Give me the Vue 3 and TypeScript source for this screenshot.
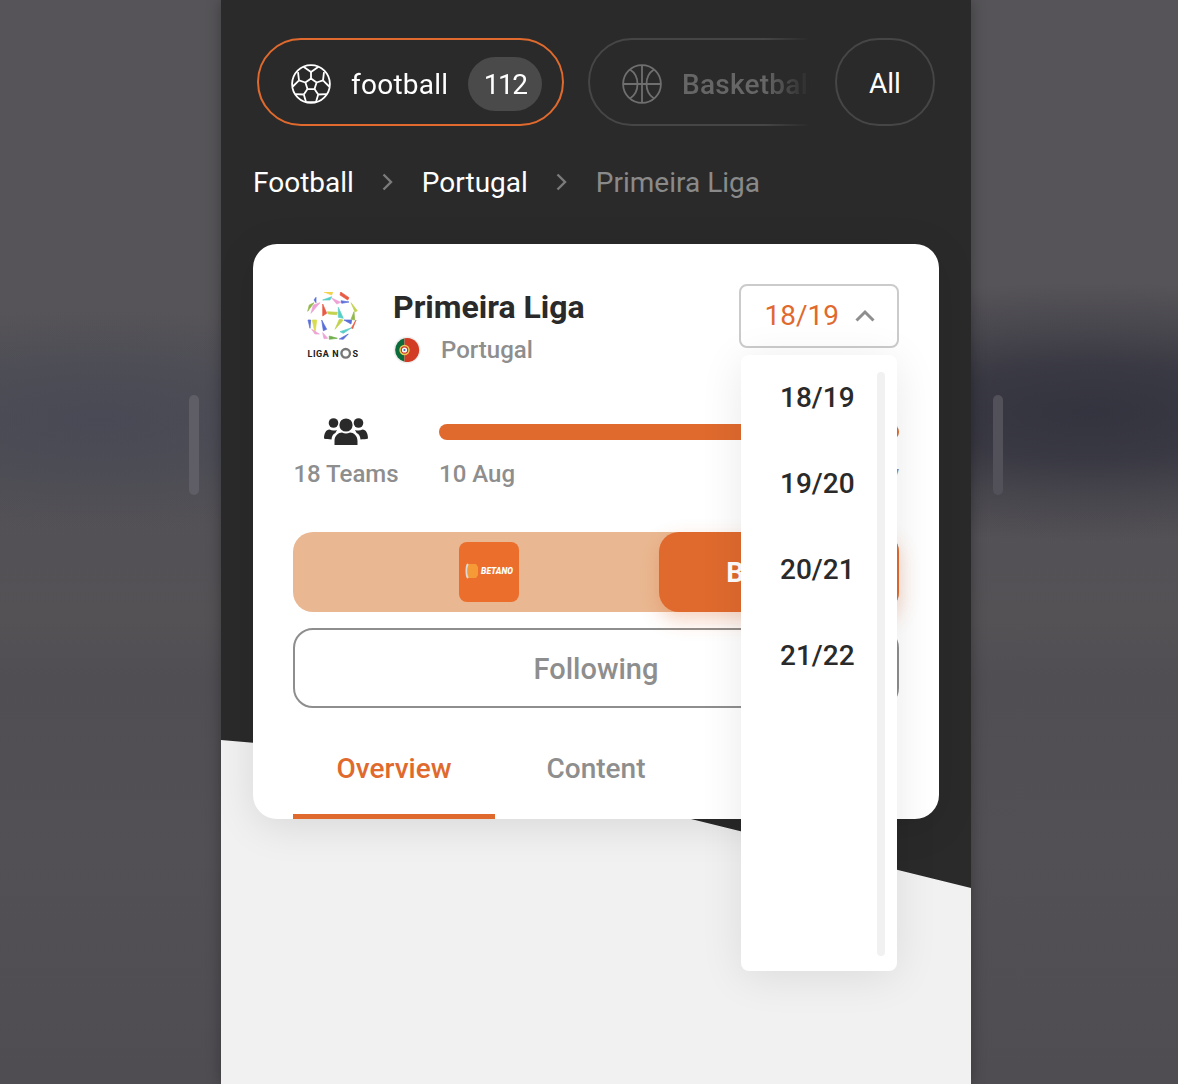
<script setup lang="ts">
const seasons: string[] = ['18/19', '19/20', '20/21', '21/22']
const shards: { p: string; c: string }[] = [
  { p: '17,0 25.7,0 24.7,3', c: '#f2d24a' },
  { p: '33.7,0 42,5.7 40.7,8 33,3', c: '#ea5b45' },
  { p: '34,8.7 42,10 34.7,11.3', c: '#5a6fd8' },
  { p: '24.7,6 33.7,10.3 29.7,12', c: '#eea3d6' },
  { p: '15.7,8 24.7,4.7 23,8', c: '#58cfc6' },
  { p: '7,8 9,5.3 9,10.7', c: '#5a6fd8' },
  { p: '13,10.7 4,21.3 6.3,13', c: '#eea3d6' },
  { p: '7,10.7 0.7,19.3 2.3,13', c: '#90b84a' },
  { p: '15.7,12 19.7,21.3 15.7,24', c: '#ea5b45' },
  { p: '20.3,19.7 30.3,20.3 29.7,22.7 21.3,22', c: '#c3d24e' },
  { p: '31.3,15.3 36.3,26.3 31.3,25.3', c: '#58cfc6' },
  { p: '44,10.7 50.3,18.7 48,20', c: '#c3d24e' },
  { p: '37,28 44.7,28 44,32', c: '#5a6fd8' },
  { p: '47,19.7 47.7,28 44,27.3', c: '#90b84a' },
  { p: '49,28 45.7,36.7 44.3,36', c: '#ea5b45' },
  { p: '1,28 3.7,28 3,36.3', c: '#5a6fd8' },
  { p: '5.3,28 9.7,28 8,41.3', c: '#d9dc4e' },
  { p: '14.7,28 19.7,37.3 16.3,38.7', c: '#5a6fd8' },
  { p: '32.3,27.3 36.3,28 28,37.3', c: '#c3d24e' },
  { p: '33,39.7 44.7,35.7 36.3,41.3', c: '#58cfc6' },
  { p: '4.7,37.3 12.3,42 8,42', c: '#eea3d6' },
  { p: '15.7,40.7 20.7,46.3 17,46.7', c: '#eea3d6' },
  { p: '22.3,44 30.3,46.3 22.3,47.3', c: '#6fae4a' },
  { p: '32.3,47 41.3,42 36.3,47.3', c: '#5a6fd8' }
]
</script>

<template>
  <div class="stage">
    <div class="handle"></div>
    <main class="phone">
      <div class="sports">
        <div class="scroller">
          <div class="pill active">
            <svg class="sport-icon" viewBox="0 0 40 40" fill="none" stroke="#fff" stroke-width="1.8" stroke-linejoin="round">
              <circle cx="20" cy="20" r="18.9" />
              <path d="M20 14.5l5.6 4-2.1 6.6h-7l-2.1-6.6z" />
              <path d="M20 14.5V8M25.600 18.500l6.400-2.200M23.500 25.100l3.700 5.400M16.500 25.100l-3.700 5.400M14.400 18.500L8 16.300" />
              <path d="M12.500 2.800L20 8l7.500-5.200M32 16.300l1-8.200M32 16.300l6.200 6.200M27.200 30.500l8.500-.3M27.200 30.500L25 38M12.800 30.500l-8.500-.3M12.800 30.500L15 38M8 16.300L7 8.100M8 16.300l-6.200 6.200M15 38.200h10" />
            </svg>
            <span class="sport-name">football</span>
            <span class="badge">112</span>
          </div>
          <div class="pill muted">
            <svg class="sport-icon" viewBox="0 0 40 40" fill="none" stroke="#6f6f6f" stroke-width="1.8">
              <circle cx="20" cy="20" r="18.9" />
              <path d="M20 1.100v37.800M1.100 20h37.800M8 5.500c5.500 3.500 7.500 9 7.500 14.500S13.500 31 8 34.500M32 5.500c-5.500 3.500-7.500 9-7.500 14.500S26.500 31 32 34.500" />
            </svg>
            <span class="sport-name">Basketball</span>
          </div>
        </div>
        <div class="all">All</div>
      </div>

      <nav class="crumbs">
        <span>Football</span>
        <svg class="crumb-arrow" viewBox="0 0 11 18" fill="none" stroke="#7b7b7b" stroke-width="2.400"><path d="M1.500 1.500L9 9l-7.500 7.500" /></svg>
        <span>Portugal</span>
        <svg class="crumb-arrow" viewBox="0 0 11 18" fill="none" stroke="#7b7b7b" stroke-width="2.400"><path d="M1.500 1.500L9 9l-7.500 7.500" /></svg>
        <span class="current">Primeira Liga</span>
      </nav>

      <section class="card">
        <header class="head">
          <svg class="league-logo" viewBox="0 0 52 68">
            <polygon v-for="s in shards" :key="s.p" :points="s.p" :fill="s.c" :stroke="s.c" stroke-width="0.700" stroke-linejoin="round" />
            <text x="0.500" y="64.500" class="logo-text" textLength="31">LIGA N</text>
            <circle cx="38.700" cy="61.300" r="4.300" fill="none" stroke="#777" stroke-width="2.400" />
            <text x="45.500" y="64.500" class="logo-text">S</text>
          </svg>
          <div class="league">
            <h1>Primeira Liga</h1>
            <div class="country">
              <svg class="flag" viewBox="0 0 28 28">
                <circle cx="14" cy="14" r="13.500" fill="#eee" />
                <path d="M11.500 2.300A12 12 0 0 0 11.500 25.700z" fill="#0b6b3a" />
                <path d="M11.500 2.300A12 12 0 1 1 11.500 25.700z" fill="#d23b24" />
                <circle cx="11.500" cy="14" r="5.200" fill="#e9cd58" />
                <circle cx="11.500" cy="14" r="3.200" fill="#fff" stroke="#c8372a" stroke-width="1.200" />
                <circle cx="11.500" cy="14" r="1.100" fill="#3d5fa8" />
              </svg>
              <span>Portugal</span>
            </div>
          </div>
          <div class="season">
            <button class="season-btn" type="button">
              <span>18/19</span>
              <svg class="chev" viewBox="0 0 20 13" fill="none" stroke="#8e8e8e" stroke-width="3"><path d="M1.500 11.500L10 3l8.500 8.500" /></svg>
            </button>
            <div class="menu">
              <ul>
                <li v-for="s in seasons" :key="s">{{ s }}</li>
              </ul>
              <div class="scrollbar"></div>
            </div>
          </div>
        </header>

        <div class="stats">
          <div class="teams">
            <svg class="team-icon" viewBox="0 0 44 27" fill="#2a2a2a">
              <circle cx="22" cy="7" r="6.600" />
              <circle cx="9.500" cy="5" r="4.800" />
              <circle cx="34.500" cy="5" r="4.800" />
              <path d="M10.500 27v-4c0-5.500 4-8.500 7.500-8.500 2.500 1.300 5.500 1.300 8 0 3.500 0 7.500 3 7.500 8.500v4z" />
              <path d="M0 20.500c0-5 2-9 5.500-9 2.200 1.200 5 1.200 7.500.4-.6 1-1 2-1.600 3-2.600 1.200-3.600 3.400-3.900 6.500-2.600 0-5.500-.3-7.500-.9z" />
              <path d="M44 20.500c0-5-2-9-5.500-9-2.200 1.200-5 1.200-7.500.4.600 1 1 2 1.600 3 2.600 1.200 3.600 3.400 3.900 6.500 2.600 0 5.500-.3 7.500-.9z" />
            </svg>
            <span class="stat-label">18 Teams</span>
          </div>
          <div class="timeline">
            <div class="bar"></div>
            <div class="dates">
              <span class="stat-label">10 Aug</span>
              <span class="stat-label">19 May</span>
            </div>
          </div>
        </div>

        <div class="bet-row">
          <div class="bet-logo-wrap">
            <div class="bet-logo">
              <svg class="bet-mark" viewBox="0 0 14 16">
                <path d="M3 1h8l2 3v8l-2 3H3z" fill="#f59a36" />
                <path d="M3 1C1 3 1 13 3 15" fill="none" stroke="#d9d9d9" stroke-width="2" />
              </svg>
              <span>BETANO</span>
            </div>
          </div>
          <button class="bet-btn" type="button">Bet Now</button>
        </div>

        <button class="follow" type="button">Following</button>

        <div class="tabs">
          <div class="tab on">Overview</div>
          <div class="tab">Content</div>
          <div class="tab">Stats</div>
        </div>
      </section>
    </main>
    <div class="handle right"></div>
  </div>
</template>

<style>
html,
body {
  margin: 0;
  background: #4f4d52;
}
</style>

<style scoped>
.stage {
  height: 1084px;
  overflow: hidden;
  display: flex;
  align-items: flex-start;
  gap: 22px;
  padding-left: 189px;
  box-sizing: border-box;
  font-family: Roboto, "Liberation Sans", sans-serif;
  background:
    radial-gradient(440px 130px at 1090px 412px, rgba(50, 50, 62, 0.95) 0, rgba(50, 50, 62, 0.8) 35%, rgba(50, 50, 62, 0.35) 68%, rgba(50, 50, 62, 0) 100%),
    radial-gradient(360px 110px at 100px 420px, rgba(68, 70, 84, 0.75) 0, rgba(68, 70, 84, 0.45) 50%, rgba(68, 70, 84, 0) 100%),
    linear-gradient(180deg, #565458 0, #565458 300px, #535155 560px, #555256 620px, #504e52 680px, #525054 850px, #4f4d51 1084px);
}

.handle {
  flex: none;
  width: 10px;
  height: 100px;
  margin-top: 395px;
  border-radius: 5px;
  background: #5f5e66;
}

.right {
  background: #52515a;
}

.phone {
  flex: none;
  width: 750px;
  height: 1084px;
  padding: 38px 32px 0;
  box-sizing: border-box;
  position: relative;
  background: #f1f1f1;
  box-shadow: 0 0 14px rgba(0, 0, 0, 0.3);
}

.phone::before {
  content: "";
  position: absolute;
  inset: 0;
  background: #2a2a2a;
  clip-path: polygon(0 0, 100% 0, 100% 888px, 470px 819px, 32px 742.700px, 0 740px);
}

.sports,
.crumbs,
.card {
  position: relative;
}

.sports {
  display: flex;
  margin: 0 4px;
}

.scroller {
  width: 578px;
  display: flex;
  gap: 24px;
  overflow: hidden;
  -webkit-mask-image: linear-gradient(90deg, #000 calc(100% - 70px), transparent calc(100% - 24px));
  mask-image: linear-gradient(90deg, #000 calc(100% - 70px), transparent calc(100% - 24px));
}

.pill {
  flex: none;
  height: 88px;
  box-sizing: border-box;
  border: 2px solid #464646;
  border-radius: 44px;
  display: flex;
  align-items: center;
  padding: 4px 20px 0 32px;
  font-size: 28px;
  color: #fff;
}

.active {
  width: 307px;
  border-color: #e06a2e;
}

.muted {
  width: 300px;
  color: #666;
}

.sport-icon {
  width: 40px;
  height: 40px;
  flex: none;
}

.sport-name {
  margin-left: 20px;
  letter-spacing: 0.25px;
}

.muted .sport-name {
  font-weight: 500;
}

.badge {
  margin-left: 20px;
  width: 74px;
  height: 54px;
  border-radius: 27px;
  background: #4a4a4a;
  display: flex;
  align-items: center;
  justify-content: center;
  letter-spacing: -1.5px;
}

.all {
  flex: none;
  width: 100px;
  height: 88px;
  padding-top: 2px;
  box-sizing: border-box;
  border: 2px solid #464646;
  border-radius: 44px;
  display: flex;
  align-items: center;
  justify-content: center;
  color: #fff;
  font-size: 28px;
}

.crumbs {
  margin-top: 38px;
  height: 36px;
  display: flex;
  align-items: center;
  gap: 28.500px;
  color: #fff;
  font-size: 28px;
}

.current {
  color: #8a8a8a;
}

.crumb-arrow {
  width: 11px;
  height: 18px;
  flex: none;
}

.card {
  margin-top: 44px;
  height: 575px;
  padding: 40px 40px 0;
  box-sizing: border-box;
  background: #fff;
  border-radius: 24px;
  box-shadow: 0 8px 40px rgba(0, 0, 0, 0.1);
}

.head {
  display: flex;
  align-items: flex-start;
  height: 76px;
}

.league-logo {
  width: 52px;
  height: 68px;
  margin: 8px 34px 0 14px;
  flex: none;
}

.logo-text {
  font-size: 9px;
  font-weight: 700;
  fill: #222;
  font-family: Roboto, "Liberation Sans", sans-serif;
}

.league {
  flex: 1;
  padding-top: 4px;
}

h1 {
  margin: 0;
  font-size: 32px;
  line-height: 38px;
  font-weight: 700;
  color: #2a2a2a;
}

.country {
  margin-top: 10px;
  display: flex;
  align-items: center;
  gap: 20px;
  font-size: 24px;
  font-weight: 500;
  color: #8e8e8e;
}

.flag {
  width: 28px;
  height: 28px;
  flex: none;
}

.season {
  position: relative;
  flex: none;
  width: 160px;
  z-index: 2;
}

.season-btn {
  width: 160px;
  height: 64px;
  padding: 0 22px 2px 23.500px;
  box-sizing: border-box;
  border: 2px solid #cbcbcb;
  border-radius: 8px;
  background: #fff;
  display: flex;
  align-items: center;
  justify-content: space-between;
  color: #e06a2e;
  font: 400 28px Roboto, "Liberation Sans", sans-serif;
}

.chev {
  width: 20px;
  height: 13px;
  flex: none;
}

.menu {
  position: absolute;
  top: 71px;
  left: 2px;
  width: 156px;
  height: 616px;
  box-sizing: border-box;
  background: #fff;
  border-radius: 8px;
  box-shadow: 0 6px 44px rgba(0, 0, 0, 0.09);
}

.menu ul {
  list-style: none;
  margin: -1px 0 0;
  padding: 0 0 0 39px;
}

.menu li {
  height: 86px;
  display: flex;
  align-items: center;
  font-size: 28px;
  font-weight: 500;
  color: #2a2a2a;
}

.scrollbar {
  position: absolute;
  top: 17px;
  right: 12px;
  width: 8px;
  height: 584px;
  border-radius: 4px;
  background: #f1f1f1;
}

.stats {
  margin-top: 58px;
  display: flex;
  gap: 40px;
}

.teams {
  flex: none;
  width: 106px;
  display: flex;
  flex-direction: column;
  align-items: center;
}

.team-icon {
  width: 44px;
  height: 27px;
  margin-bottom: 14px;
}

.stat-label {
  font-size: 24px;
  line-height: 30px;
  font-weight: 500;
  color: #8e8e8e;
  white-space: nowrap;
}

.timeline {
  flex: 1;
  padding-top: 6px;
}

.bar {
  height: 16px;
  border-radius: 8px;
  background: #e06a2e;
}

.dates {
  margin-top: 19px;
  display: flex;
  justify-content: space-between;
}

.bet-row {
  margin-top: 43px;
  height: 80px;
  display: flex;
  border-radius: 20px;
  background: #e9b892;
}

.bet-logo-wrap {
  flex: 1;
  display: flex;
  align-items: center;
  justify-content: center;
  padding-left: 26px;
}

.bet-logo {
  width: 60px;
  height: 60px;
  border-radius: 8px;
  background: #eb6e2c;
  display: flex;
  align-items: center;
  justify-content: center;
  gap: 2px;
  color: #fff;
  font-size: 8.500px;
  font-weight: 900;
  font-style: italic;
  padding-bottom: 3px;
  box-sizing: border-box;
  white-space: nowrap;
}

.bet-mark {
  width: 14px;
  height: 16px;
  flex: none;
}

.bet-btn {
  flex: none;
  width: 240px;
  border: 0;
  border-radius: 20px;
  background: #e06a2e;
  color: #fff;
  font: 700 28px Roboto, "Liberation Sans", sans-serif;
  box-shadow: 0 8px 20px rgba(224, 106, 46, 0.3);
}

.follow {
  display: block;
  width: 100%;
  height: 80px;
  margin-top: 16px;
  padding-top: 2px;
  box-sizing: border-box;
  border: 2px solid #8e8e8e;
  border-radius: 20px;
  background: #fff;
  color: #8e8e8e;
  font: 500 29px Roboto, "Liberation Sans", sans-serif;
}

.tabs {
  margin-top: 20px;
  height: 91px;
  display: flex;
}

.tab {
  flex: 1;
  box-sizing: border-box;
  padding-top: 23px;
  line-height: 36px;
  text-align: center;
  font-size: 28px;
  font-weight: 500;
  color: #8e8e8e;
}

.on {
  color: #e06a2e;
  border-bottom: 5px solid #e06a2e;
}
</style>
